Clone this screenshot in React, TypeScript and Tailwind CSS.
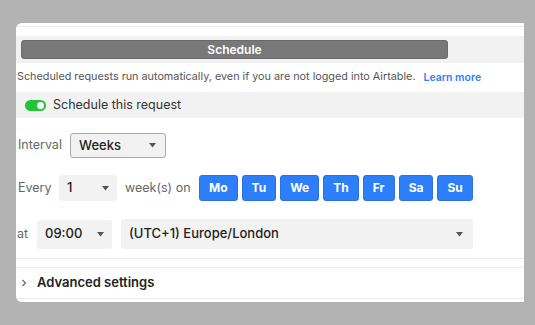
import React from 'react';

const days = ['Mo', 'Tu', 'We', 'Th', 'Fr', 'Sa', 'Su'];

const Caret: React.FC = () => (
  <svg width="7" height="5" viewBox="0 0 7 5" className="shrink-0">
    <path d="M0 0 L7 0 L3.5 4.5 Z" fill="#555" />
  </svg>
);

const App: React.FC = () => {
  return (
    <div
      className="w-[535px] h-[325px] bg-[#b3b3b3] pt-[23px] pl-[16px] overflow-hidden"
      style={{ fontFamily: 'Inter, "Noto Sans", sans-serif' }}
    >
      <div className="w-[508px] h-[279px] bg-white rounded-l-[6px] overflow-hidden flex flex-col">
        {/* top strip */}
        <div className="mt-[3px] h-[10px] border-t border-[#ececec]" />

        {/* header band */}
        <div className="h-[27px] bg-[#f2f2f2] flex items-center">
          <div className="ml-[5px] w-[427px] h-[19px] rounded-[3px] bg-[#787878] border border-[#6a6a6a] flex items-center justify-center text-white text-[12px] font-semibold">
            Schedule
          </div>
        </div>

        {/* description */}
        <div className="h-[29px] flex items-center pl-[1px] text-[10.8px] text-[#555]">
          <span>Scheduled requests run automatically, even if you are not logged into Airtable.</span>
          <span className="ml-[8px] text-[#2d7ff9] font-semibold text-[10.5px]">Learn more</span>
        </div>

        {/* toggle row */}
        <div className="h-[26px] bg-[#f2f2f2] flex items-center pl-[9px]">
          <div className="w-[21px] h-[11px] rounded-full bg-[#24c338] flex items-center justify-end pr-[2px]">
            <div className="w-[7px] h-[7px] rounded-full bg-white" />
          </div>
          <span className="ml-[7px] text-[12.5px] text-[#333]">Schedule this request</span>
        </div>

        {/* interval */}
        <div className="mt-[15px] h-[25px] flex items-center pl-[2px]">
          <span className="w-[52px] text-[12.5px] text-[#666]">Interval</span>
          <div className="w-[96px] h-[25px] rounded-[3px] border border-[#a8a8a8] bg-[#f2f2f2] flex items-center justify-between pl-[8px] pr-[9px]">
            <span className="text-[13px] text-[#222] font-medium">Weeks</span>
            <Caret />
          </div>
        </div>

        {/* every */}
        <div className="mt-[17px] h-[26px] flex items-center pl-[2px]">
          <span className="w-[41px] text-[12.5px] text-[#666]">Every</span>
          <div className="w-[58px] h-[26px] rounded-[3px] bg-[#f2f2f2] flex items-center justify-between pl-[8px] pr-[8px]">
            <span className="text-[13px] text-[#222] font-medium">1</span>
            <Caret />
          </div>
          <span className="ml-[8px] w-[74px] text-[12.5px] text-[#666]">week(s) on</span>
          <div className="flex gap-[4px]">
            {days.map((d) => (
              <div
                key={d}
                className="h-[26px] px-[9px] min-w-[32px] rounded-[3px] bg-[#2d7ff9] border border-[#2a72e0] flex items-center justify-center text-white text-[12px] font-bold"
              >
                {d}
              </div>
            ))}
          </div>
        </div>

        {/* at */}
        <div className="mt-[18px] h-[30px] flex items-center pl-[1px]">
          <span className="w-[20px] text-[12.5px] text-[#666]">at</span>
          <div className="w-[75px] h-[29px] rounded-[3px] bg-[#f2f2f2] flex items-center justify-between pl-[8px] pr-[8px]">
            <span className="text-[13px] text-[#222] font-medium">09:00</span>
            <Caret />
          </div>
          <div className="ml-[9px] w-[352px] h-[30px] rounded-[3px] bg-[#f2f2f2] flex items-center justify-between pl-[8px] pr-[10px]">
            <span className="text-[13px] text-[#222] font-medium">(UTC+1) Europe/London</span>
            <Caret />
          </div>
        </div>

        {/* separators */}
        <div className="mt-[9px] border-t border-[#ececec]" />
        <div className="mt-[8px] h-[32px] border-t border-b border-[#ececec] flex items-center pl-[5px]">
          <svg width="6" height="8" viewBox="0 0 6 8" className="shrink-0">
            <path d="M1.5 1 L4.5 4 L1.5 7" fill="none" stroke="#666" strokeWidth="1.2" />
          </svg>
          <span className="ml-[10px] text-[13px] text-[#222] font-semibold">Advanced settings</span>
        </div>
      </div>
    </div>
  );
};

export default App;
